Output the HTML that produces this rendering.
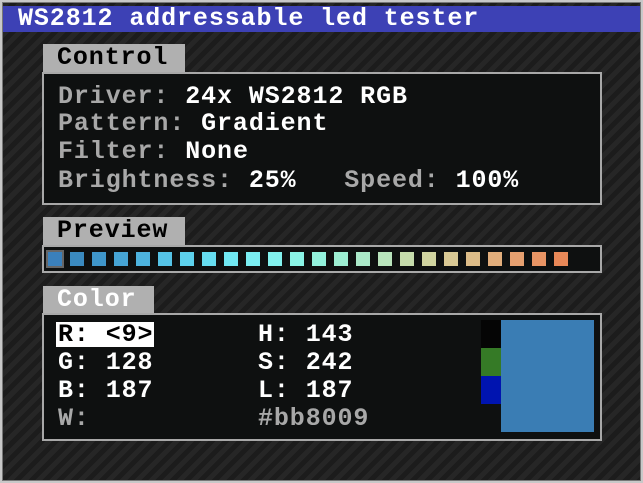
<!DOCTYPE html>
<html><head><style>
*{margin:0;padding:0;box-sizing:border-box}
body{width:643px;height:483px;overflow:hidden;background:#c8c8c8;position:relative;font-family:"Liberation Mono",monospace;font-weight:bold;font-size:25px;letter-spacing:0.9px}
#win{position:absolute;left:2px;top:2px;width:639px;height:479px;background:repeating-linear-gradient(135deg,#262626 0 5px,#1c1c1c 5px 10px);border:1px solid #777}
#title{position:absolute;left:0;top:3px;width:637px;height:26px;background:#3d41b5;color:#fff;line-height:26px;padding-left:15px}
.tab{position:absolute;background:#b0b0b0;color:#000;line-height:28px;padding-left:14px}
.box{position:absolute;left:39px;width:560px;border:2px solid #a8a8a8;background:#0e1010}
.t{position:absolute;white-space:pre;line-height:26px}
.l{color:#a8a8a8}.v{color:#fff}
.led{position:absolute;top:6px;width:14px;height:14px}
</style></head><body><div id="win">
<div class="tab" style="left:40px;top:41px;width:142px;height:28px">Control</div>
<div id="title">WS2812 addressable led tester</div>
<div class="box" style="top:69px;height:133px"></div>
<div class="t" style="left:55px;top:81px"><span class="l">Driver: </span><span class="v">24x WS2812 RGB</span></div>
<div class="t" style="left:55px;top:108px"><span class="l">Pattern: </span><span class="v">Gradient</span></div>
<div class="t" style="left:55px;top:136px"><span class="l">Filter: </span><span class="v">None</span></div>
<div class="t" style="left:55px;top:165px"><span class="l">Brightness: </span><span class="v">25%</span><span class="l">   Speed: </span><span class="v">100%</span></div>
<div class="tab" style="left:40px;top:214px;width:142px;height:28px">Preview</div>
<div class="box" style="top:242px;height:28px" id="pv"></div>
<div class="tab" style="left:40px;top:283px;width:111px;height:27px;color:#fff">Color</div>
<div class="box" style="top:310px;height:128px"></div>
<div class="t" style="left:53px;top:319px;background:#fff;color:#000;width:98px;height:25px;padding-left:2px;line-height:25px">R: &lt;9&gt;</div>
<div class="t v" style="left:55px;top:347px">G: 128</div>
<div class="t v" style="left:55px;top:375px">B: 187</div>
<div class="t l" style="left:55px;top:403px">W:</div>
<div class="t v" style="left:255px;top:319px">H: 143</div>
<div class="t v" style="left:255px;top:347px">S: 242</div>
<div class="t v" style="left:255px;top:375px">L: 187</div>
<div class="t l" style="left:255px;top:403px">#bb8009</div>
<div style="position:absolute;left:478px;top:317px;width:20px;height:28px;background:#050505"></div>
<div style="position:absolute;left:478px;top:345px;width:20px;height:28px;background:#357a26"></div>
<div style="position:absolute;left:478px;top:373px;width:20px;height:28px;background:#0014b0"></div>
<div style="position:absolute;left:498px;top:317px;width:93px;height:112px;background:#3a7db4"></div>
</div>
<script>
var c=["#3a8abf","#3f96ca","#46a4d4","#4db3de","#55c3e6","#5dd1ec","#66ddf0","#70e8f2","#7aeef2","#82f2ee","#8af4e6","#92f2dc","#9ceed2","#aae9c8","#b8e4bc","#c6dcac","#d0d4a0","#d8c894","#dcbc88","#e2ae7c","#e6a070","#e89464","#e88858"];
var p=document.getElementById('pv');
var s='<div class="led" style="left:2px;top:3px;width:18px;height:18px;background:#3a80bb;border:2px solid #666"></div>';
for(var i=0;i<23;i++){s+='<div class="led" style="left:'+(26+i*22)+'px;top:5px;background:'+c[i]+'"></div>';}
p.innerHTML=s;
</script>
</body></html>
